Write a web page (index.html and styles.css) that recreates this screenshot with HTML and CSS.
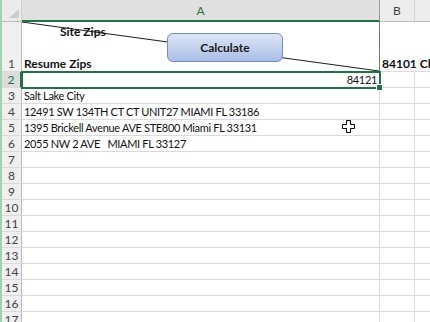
FILE: index.html
```html
<!DOCTYPE html>
<html>
<head>
<meta charset="utf-8">
<link rel="stylesheet" href="styles.css">
</head>
<body>
<div class="sheet">
  <div class="corner"><span class="tri"></span></div>
  <div class="colhead sel">A</div>
  <div class="colhead">B</div>
  <div class="colhead"></div>

  <div class="rowhead r1">1</div>
  <div class="cell a1">
    <svg class="diag" viewBox="0 0 358 50" preserveAspectRatio="none"><line x1="0" y1="0" x2="358" y2="50" stroke="#1a1a1a" stroke-width="1"/></svg>
    <span class="site">Site Zips</span>
    <span class="bold">Resume Zips</span>
  </div>
  <div class="cell b"><span class="over">84101 Cleveland</span></div>
  <div class="cell"></div>

  <div class="rowhead sel">2</div>
  <div class="cell a2"><span class="num">84121</span><span class="handle"></span></div>
  <div class="cell"></div>
  <div class="cell"></div>

  <div class="rowhead">3</div>
  <div class="cell">Salt Lake City</div>
  <div class="cell"></div>
  <div class="cell"></div>

  <div class="rowhead">4</div>
  <div class="cell">12491 SW 134TH CT CT UNIT27 MIAMI FL 33186</div>
  <div class="cell"></div>
  <div class="cell"></div>

  <div class="rowhead">5</div>
  <div class="cell">1395 Brickell Avenue AVE STE800 Miami FL 33131</div>
  <div class="cell"></div>
  <div class="cell"></div>

  <div class="rowhead">6</div>
  <div class="cell">2055 NW 2 AVE&nbsp;&nbsp; MIAMI FL 33127</div>
  <div class="cell"></div>
  <div class="cell"></div>

  <div class="rowhead">7</div><div class="cell"></div><div class="cell"></div><div class="cell"></div>
  <div class="rowhead">8</div><div class="cell"></div><div class="cell"></div><div class="cell"></div>
  <div class="rowhead">9</div><div class="cell"></div><div class="cell"></div><div class="cell"></div>
  <div class="rowhead">10</div><div class="cell"></div><div class="cell"></div><div class="cell"></div>
  <div class="rowhead">11</div><div class="cell"></div><div class="cell"></div><div class="cell"></div>
  <div class="rowhead">12</div><div class="cell"></div><div class="cell"></div><div class="cell"></div>
  <div class="rowhead">13</div><div class="cell"></div><div class="cell"></div><div class="cell"></div>
  <div class="rowhead">14</div><div class="cell"></div><div class="cell"></div><div class="cell"></div>
  <div class="rowhead">15</div><div class="cell"></div><div class="cell"></div><div class="cell"></div>
  <div class="rowhead">16</div><div class="cell"></div><div class="cell"></div><div class="cell"></div>
  <div class="rowhead">17</div><div class="cell"></div><div class="cell"></div><div class="cell"></div>

  <div class="button">Calculate</div>
  <svg class="cursor" width="15" height="15" viewBox="0 0 15 15">
    <path d="M5.5 1.5h4v4h4v4h-4v4h-4v-4h-4v-4h4z" fill="#fff" stroke="#000" stroke-width="1"/>
  </svg>
</div>
</body>
</html>
```

FILE: styles.css
```css
html, body {
  margin: 0;
  padding: 0;
  background: #fff;
  overflow: hidden;
}
body {
  width: 430px;
  height: 322px;
  font-family: Lato, "Open Sans", sans-serif;
  font-size: 11px;
  color: #111;
}
.sheet {
  position: relative;
  display: grid;
  grid-template-columns: 20px 358px 35px 40px;
  grid-template-rows: 22px 50px repeat(16, 16px);
  border-left: 2px solid #9fd3b0;
  box-sizing: border-box;
  width: 455px;
}
.corner {
  position: relative;
  background: #ebebeb;
  border-right: 1px solid #cfcfcf;
  border-bottom: 1px solid #bdbdbd;
}
.tri {
  position: absolute;
  right: 2px;
  bottom: 3px;
  width: 0;
  height: 0;
  border-left: 10px solid transparent;
  border-bottom: 9px solid #cdcdcd;
}
.colhead {
  background: #ececec;
  border-right: 1px solid #d4d4d4;
  border-bottom: 1px solid #bdbdbd;
  display: flex;
  align-items: center;
  justify-content: center;
  color: #444;
  font-size: 12px;
}
.colhead.sel {
  background: #e0e0e0;
  color: #217346;
  border-bottom: 2px solid #217346;
  border-right: 1px solid #9b9b9b;
}
.rowhead {
  background: #efefef;
  border-right: 1px solid #bdbdbd;
  border-bottom: 1px solid #dadada;
  color: #444;
  display: flex;
  align-items: flex-end;
  justify-content: center;
  font-size: 12px;
  line-height: 15px;
}
.rowhead.sel {
  background: #dcdcdc;
  color: #217346;
  border-right: 2px solid #217346;
}
.cell {
  border-right: 1px solid #dadcdf;
  border-bottom: 1px solid #dadada;
  display: flex;
  align-items: flex-end;
  padding-left: 2px;
  line-height: 15px;
  white-space: nowrap;
  min-width: 0;
  letter-spacing: -0.33px;
}
.a1 {
  position: relative;
  border-right: 1px solid #777;
}
.bold, .site, .cell.b {
  font-weight: bold;
  font-size: 12px;
  letter-spacing: 0;
}
.diag {
  position: absolute;
  left: 0;
  top: 0;
  width: 100%;
  height: 100%;
}
.site {
  position: absolute;
  left: 38px;
  top: 2px;
  line-height: 15px;
}
.cell.b {
  overflow: visible;
  border-right-color: transparent;
}
.over { position: relative; z-index: 1; }
.a2 {
  position: relative;
  justify-content: flex-end;
  padding-right: 2px;
  outline: 2px solid #217346;
  outline-offset: -1px;
  z-index: 2;
}
.handle {
  position: absolute;
  right: -4px;
  bottom: -4px;
  width: 5px;
  height: 5px;
  background: #217346;
  border: 1px solid #fff;
}
.button {
  position: absolute;
  left: 165px;
  top: 33px;
  width: 116px;
  height: 29px;
  box-sizing: border-box;
  border: 1px solid #6f8dc0;
  border-radius: 6px;
  background: linear-gradient(#dce5f6, #a9bee6);
  display: flex;
  align-items: center;
  justify-content: center;
  font-weight: bold;
  font-size: 12px;
  color: #1a1a1a;
  z-index: 3;
}
.cursor {
  position: absolute;
  left: 339px;
  top: 119px;
  z-index: 4;
}
```
